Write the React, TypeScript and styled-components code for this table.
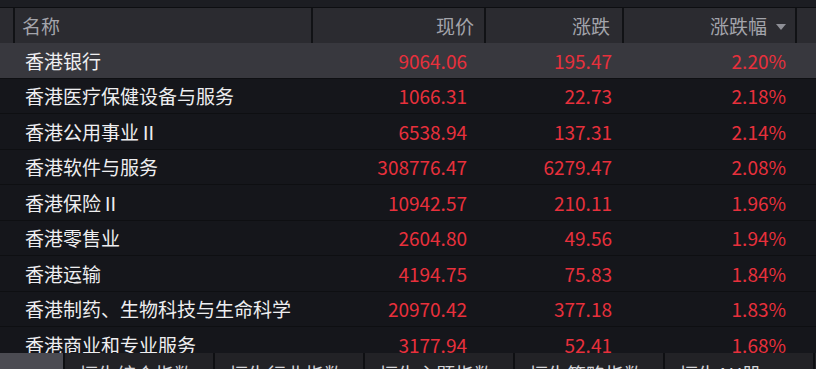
import { createGlobalStyle, styled } from 'styled-components'

const GlobalStyle = createGlobalStyle`
  html, body {
    margin: 0;
    padding: 0;
    background: #15161b;
    overflow: hidden;
  }
  body {
    font-family: "Noto Sans CJK SC", "Noto Sans", sans-serif;
  }
`

const rows = [
  { name: '香港银行', price: '9064.06', change: '195.47', pct: '2.20%' },
  { name: '香港医疗保健设备与服务', price: '1066.31', change: '22.73', pct: '2.18%' },
  { name: '香港公用事业Ⅱ', price: '6538.94', change: '137.31', pct: '2.14%' },
  { name: '香港软件与服务', price: '308776.47', change: '6279.47', pct: '2.08%' },
  { name: '香港保险Ⅱ', price: '10942.57', change: '210.11', pct: '1.96%' },
  { name: '香港零售业', price: '2604.80', change: '49.56', pct: '1.94%' },
  { name: '香港运输', price: '4194.75', change: '75.83', pct: '1.84%' },
  { name: '香港制药、生物科技与生命科学', price: '20970.42', change: '377.18', pct: '1.83%' },
  { name: '香港商业和专业服务', price: '3177.94', change: '52.41', pct: '1.68%' },
]

const tabs = ['恒生综合指数', '恒生行业指数', '恒生主题指数', '恒生策略指数', '恒生AH股']

function App() {
  return (
    <StyledPage>
      <GlobalStyle />
      <StyledTopStrip />
      <StyledHeader>
        <StyledHeadCell />
        <StyledHeadCell $align="left" $pad={7}>名称</StyledHeadCell>
        <StyledHeadCell $pad={10}>现价</StyledHeadCell>
        <StyledHeadCell $pad={12}>涨跌</StyledHeadCell>
        <StyledHeadCell $pad={9}>
          涨跌幅
          <StyledSortArrow />
        </StyledHeadCell>
        <StyledHeadCell $last />
      </StyledHeader>
      <StyledBody>
        {rows.map((row, i) => (
          <StyledRow key={row.name} $active={i === 0}>
            <span />
            <StyledName>{row.name}</StyledName>
            <StyledNum $pad={19}>{row.price}</StyledNum>
            <StyledNum $pad={12}>{row.change}</StyledNum>
            <StyledNum $pad={11}>{row.pct}</StyledNum>
            <span />
          </StyledRow>
        ))}
      </StyledBody>
      <StyledTabBar>
        <StyledTab $first />
        {tabs.map((t) => (
          <StyledTab key={t}>{t}</StyledTab>
        ))}
      </StyledTabBar>
    </StyledPage>
  )
}

const columns = '15px 298px 173px 138px 173px 1fr'

const StyledPage = styled.div`
  display: flex;
  flex-direction: column;
  width: 816px;
  height: 369px;
  overflow: hidden;
  background: #15161b;
`

const StyledTopStrip = styled.div`
  flex: 0 0 7px;
  background: #1c1d22;
  border-bottom: 1px solid #0d0e11;
`

const StyledHeader = styled.div`
  flex: 0 0 35px;
  display: grid;
  grid-template-columns: ${columns};
  background: #2b2b30;
`

const StyledHeadCell = styled.div<{ $align?: string; $pad?: number; $last?: boolean }>`
  display: flex;
  align-items: center;
  justify-content: ${(p) => (p.$align === 'left' ? 'flex-start' : 'flex-end')};
  padding: ${(p) => (p.$align === 'left' ? `0 0 0 ${p.$pad ?? 0}px` : `0 ${p.$pad ?? 0}px 0 0`)};
  border-right: ${(p) => (p.$last ? 'none' : '2px solid #111215')};
  color: #a3a4ab;
  font-size: 19px;
  line-height: 1;
`

const StyledSortArrow = styled.span`
  display: inline-block;
  margin-left: 9px;
  margin-top: 2px;
  width: 0;
  height: 0;
  border-left: 5px solid transparent;
  border-right: 5px solid transparent;
  border-top: 6px solid #8e8f96;
`

const StyledBody = styled.div`
  flex: 0 0 310px;
  overflow: hidden;
`

const StyledRow = styled.div<{ $active?: boolean }>`
  display: grid;
  grid-template-columns: ${columns};
  height: 35.5px;
  box-sizing: border-box;
  border-bottom: 1px solid #0e0f12;
  background: ${(p) => (p.$active ? '#38383e' : '#15161b')};
  align-items: center;
`

const StyledName = styled.span`
  padding-left: 10px;
  color: #eeeef0;
  font-size: 19px;
  white-space: nowrap;
`

const StyledNum = styled.span<{ $pad: number }>`
  text-align: right;
  padding-right: ${(p) => p.$pad}px;
  color: #e8303c;
  font-size: 19px;
`

const StyledTabBar = styled.div`
  flex: 0 0 32px;
  display: flex;
  background: #222226;
`

const StyledTab = styled.div<{ $first?: boolean }>`
  flex: 0 0 ${(p) => (p.$first ? '65px' : '150px')};
  box-sizing: border-box;
  padding: 10px 0 0 14px;
  background: ${(p) => (p.$first ? '#4b4b52' : '#222226')};
  border-right: 2px solid #0e0f12;
  color: #d4d4d8;
  font-size: 19px;
  line-height: 1.2;
  white-space: nowrap;
`

export default App
